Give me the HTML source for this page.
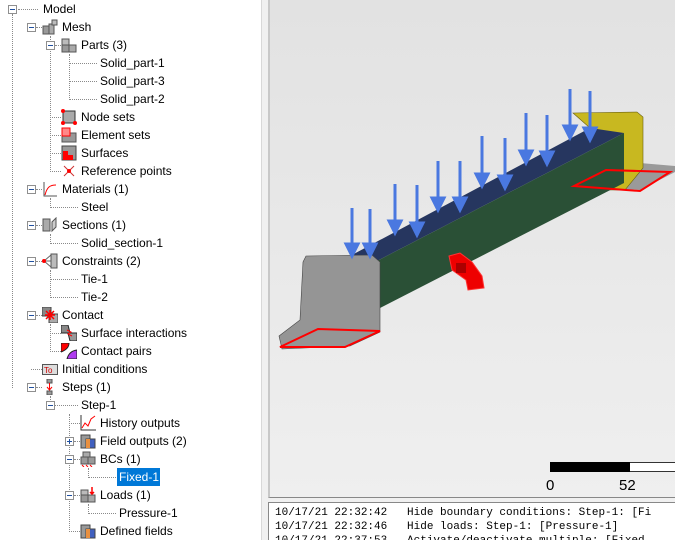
<!DOCTYPE html>
<html style="width:675px;height:540px;overflow:hidden"><head><meta charset="utf-8"><style>
*{margin:0;padding:0;box-sizing:border-box}
body{width:675px;height:540px;overflow:hidden;background:#f0f0f0;font-family:"Liberation Sans",sans-serif;position:relative}
#tree{position:absolute;left:0;top:0;width:262px;height:540px;background:#fff;border-right:1px solid #d8d8d8}
.t{position:absolute;font-size:12px;color:#000;line-height:16px;white-space:nowrap}
.v{position:absolute;width:0;border-left:1px dotted #8a8a8a}
.h{position:absolute;height:0;border-top:1px dotted #8a8a8a}
.b{position:absolute;width:9px;height:9px;border:1px solid #8f8f8f;background:#fff}
.b:after{content:"";position:absolute;left:1px;top:3px;width:5px;height:1px;background:#2050a0}
.b.p:before{content:"";position:absolute;left:3px;top:1px;width:1px;height:5px;background:#2050a0}
.i{position:absolute;width:16px;height:16px}
#vp{position:absolute;left:268px;top:0;width:407px;height:498px;background:linear-gradient(#e2e2e2,#efefef);border-left:2px solid #c8c8c8;border-bottom:1px solid #888;overflow:hidden}
#con{position:absolute;left:268px;top:502px;width:407px;height:38px;background:#fff;border:1px solid #888;border-right:none;border-bottom:none;font-family:"Liberation Mono",monospace;font-size:11px;line-height:14px;padding:3px 0 0 6px;white-space:pre;color:#000;overflow:hidden}
</style></head><body>
<div id="tree">
<div class="v" style="left:12px;top:14px;height:374px"></div>
<div class="v" style="left:50px;top:36px;height:136px"></div>
<div class="v" style="left:69px;top:54px;height:46px"></div>
<div class="v" style="left:50px;top:198px;height:10px"></div>
<div class="v" style="left:50px;top:234px;height:10px"></div>
<div class="v" style="left:50px;top:270px;height:28px"></div>
<div class="v" style="left:50px;top:324px;height:28px"></div>
<div class="v" style="left:50px;top:396px;height:10px"></div>
<div class="v" style="left:69px;top:414px;height:118px"></div>
<div class="v" style="left:88px;top:468px;height:10px"></div>
<div class="v" style="left:88px;top:504px;height:10px"></div>
<div class="h" style="left:18px;top:9px;width:20px"></div>
<div class="h" style="left:36px;top:27px;width:6px"></div>
<div class="h" style="left:55px;top:45px;width:6px"></div>
<div class="h" style="left:69px;top:63px;width:28px"></div>
<div class="h" style="left:69px;top:81px;width:28px"></div>
<div class="h" style="left:69px;top:99px;width:28px"></div>
<div class="h" style="left:50px;top:117px;width:11px"></div>
<div class="h" style="left:50px;top:135px;width:11px"></div>
<div class="h" style="left:50px;top:153px;width:11px"></div>
<div class="h" style="left:50px;top:171px;width:11px"></div>
<div class="h" style="left:36px;top:189px;width:6px"></div>
<div class="h" style="left:50px;top:207px;width:28px"></div>
<div class="h" style="left:36px;top:225px;width:6px"></div>
<div class="h" style="left:50px;top:243px;width:28px"></div>
<div class="h" style="left:36px;top:261px;width:6px"></div>
<div class="h" style="left:50px;top:279px;width:28px"></div>
<div class="h" style="left:50px;top:297px;width:28px"></div>
<div class="h" style="left:36px;top:315px;width:6px"></div>
<div class="h" style="left:50px;top:333px;width:11px"></div>
<div class="h" style="left:50px;top:351px;width:11px"></div>
<div class="h" style="left:31px;top:369px;width:11px"></div>
<div class="h" style="left:36px;top:387px;width:6px"></div>
<div class="h" style="left:55px;top:405px;width:23px"></div>
<div class="h" style="left:69px;top:423px;width:11px"></div>
<div class="h" style="left:74px;top:441px;width:6px"></div>
<div class="h" style="left:74px;top:459px;width:6px"></div>
<div class="h" style="left:88px;top:477px;width:28px"></div>
<div class="h" style="left:74px;top:495px;width:6px"></div>
<div class="h" style="left:88px;top:513px;width:28px"></div>
<div class="h" style="left:69px;top:531px;width:11px"></div>
<div class="b" style="left:8px;top:5px"></div>
<div class="b" style="left:27px;top:23px"></div>
<div class="b" style="left:46px;top:41px"></div>
<div class="b" style="left:27px;top:185px"></div>
<div class="b" style="left:27px;top:221px"></div>
<div class="b" style="left:27px;top:257px"></div>
<div class="b" style="left:27px;top:311px"></div>
<div class="b" style="left:27px;top:383px"></div>
<div class="b" style="left:46px;top:401px"></div>
<div class="b p" style="left:65px;top:437px"></div>
<div class="b" style="left:65px;top:455px"></div>
<div class="b" style="left:65px;top:491px"></div>
<svg class="i" style="left:42px;top:19px" viewBox="0 0 16 16"><rect x="1" y="7" width="6" height="8" fill="#999" stroke="#555"/><rect x="7" y="5" width="5" height="10" fill="#aaa" stroke="#555"/><rect x="10" y="1" width="5" height="5" fill="#bbb" stroke="#555"/></svg>
<svg class="i" style="left:61px;top:37px" viewBox="0 0 16 16"><rect x="1" y="8" width="7" height="7" fill="#999" stroke="#555"/><rect x="8" y="8" width="7" height="7" fill="#aaa" stroke="#555"/><rect x="1" y="2" width="7" height="6" fill="#bbb" stroke="#555"/></svg>
<svg class="i" style="left:61px;top:109px" viewBox="0 0 16 16"><rect x="2" y="2" width="12" height="12" fill="#aaa" stroke="#333"/><circle cx="2" cy="2" r="2" fill="red"/><circle cx="2" cy="14" r="2" fill="red"/><circle cx="14" cy="14" r="2" fill="red"/></svg>
<svg class="i" style="left:61px;top:127px" viewBox="0 0 16 16"><rect x="1" y="6" width="14" height="9" fill="#999" stroke="#555"/><rect x="1" y="1" width="8" height="8" fill="#f88" stroke="red"/></svg>
<svg class="i" style="left:61px;top:145px" viewBox="0 0 16 16"><rect x="1" y="1" width="14" height="14" fill="#999" stroke="#444"/><rect x="2" y="6" width="5" height="4" fill="red"/><rect x="2" y="10" width="10" height="5" fill="red"/></svg>
<svg class="i" style="left:61px;top:163px" viewBox="0 0 16 16"><path d="M3 3L13 13M13 3L3 13" stroke="#c33" stroke-width="1"/><circle cx="8" cy="8" r="2" fill="red"/></svg>
<svg class="i" style="left:42px;top:181px" viewBox="0 0 16 16"><path d="M2 1V15H15" stroke="#555" fill="none"/><path d="M3 14C5 6 8 4 14 4" stroke="red" fill="none"/></svg>
<svg class="i" style="left:42px;top:217px" viewBox="0 0 16 16"><rect x="1" y="2" width="7" height="12" fill="#aaa" stroke="#555"/><path d="M10 14L14 10V1L10 5Z" fill="#ccc" stroke="#555"/></svg>
<svg class="i" style="left:42px;top:253px" viewBox="0 0 16 16"><path d="M2 8L9 2M2 8L9 8M2 8L9 14" stroke="#666"/><rect x="9" y="1" width="6" height="14" fill="#bbb" stroke="#555"/><circle cx="2" cy="8" r="2" fill="red"/></svg>
<svg class="i" style="left:42px;top:307px" viewBox="0 0 16 16"><rect x="0" y="0" width="9" height="9" fill="#888" stroke="#444"/><rect x="7" y="7" width="9" height="9" fill="#aaa" stroke="#444"/><path d="M8 3V13M3 8H13M4 4L12 12M12 4L4 12" stroke="red" stroke-width="1.5"/></svg>
<svg class="i" style="left:61px;top:325px" viewBox="0 0 16 16"><path d="M0 0H7L9 8H0Z" fill="#888" stroke="#222"/><path d="M7 8H16V16H9Z" fill="#999" stroke="#222"/><path d="M6 5L10 7L7 9L11 11" stroke="red" fill="none"/></svg>
<svg class="i" style="left:61px;top:343px" viewBox="0 0 16 16"><path d="M0 0H8Q8 6 0 9Z" fill="red" stroke="#222"/><path d="M16 16H6Q8 8 16 7Z" fill="#b03cf0" stroke="#222"/></svg>
<svg class="i" style="left:42px;top:361px" viewBox="0 0 16 16"><rect x="0.5" y="3.5" width="15" height="10" fill="#ddd" stroke="#555"/><text x="2" y="12" font-size="8" fill="#c00" font-family="Liberation Sans">To</text></svg>
<svg class="i" style="left:42px;top:379px" viewBox="0 0 16 16"><rect x="5" y="0" width="5" height="4" fill="#999" stroke="#555"/><rect x="5" y="12" width="5" height="4" fill="#999" stroke="#555"/><path d="M7.5 4V11M5 8L7.5 11L10 8" stroke="red" fill="none"/></svg>
<svg class="i" style="left:80px;top:415px" viewBox="0 0 16 16"><path d="M1 0V15H16" stroke="#333" fill="none"/><path d="M2 13L5 8L8 11L11 4L15 1" stroke="red" fill="none"/></svg>
<svg class="i" style="left:80px;top:433px" viewBox="0 0 16 16"><rect x="1" y="2" width="9" height="13" fill="#999" stroke="#444"/><rect x="6" y="6" width="9" height="9" fill="#4060c0" stroke="#444"/><rect x="6" y="6" width="4" height="9" fill="#e89040"/></svg>
<svg class="i" style="left:80px;top:451px" viewBox="0 0 16 16"><rect x="3" y="1" width="7" height="6" fill="#aaa" stroke="#555"/><rect x="1" y="6" width="7" height="7" fill="#999" stroke="#555"/><rect x="8" y="6" width="7" height="7" fill="#999" stroke="#555"/><path d="M2 14L4 16M6 14L8 16M10 14L12 16" stroke="red"/></svg>
<svg class="i" style="left:80px;top:487px" viewBox="0 0 16 16"><rect x="1" y="8" width="7" height="7" fill="#999" stroke="#555"/><rect x="8" y="8" width="7" height="7" fill="#aaa" stroke="#555"/><rect x="1" y="3" width="7" height="5" fill="#bbb" stroke="#555"/><path d="M12 0V7M10 5L12 7L14 5" stroke="red" stroke-width="1.5" fill="none"/></svg>
<svg class="i" style="left:80px;top:523px" viewBox="0 0 16 16"><rect x="1" y="2" width="9" height="13" fill="#999" stroke="#444"/><rect x="6" y="6" width="9" height="9" fill="#4060c0" stroke="#444"/><rect x="6" y="6" width="4" height="9" fill="#e89040"/></svg>
<div style="position:absolute;left:117px;top:468px;width:43px;height:18px;background:#0078d7"></div>
<div class="t" style="left:43px;top:1px">Model</div>
<div class="t" style="left:62px;top:19px">Mesh</div>
<div class="t" style="left:81px;top:37px">Parts (3)</div>
<div class="t" style="left:100px;top:55px">Solid_part-1</div>
<div class="t" style="left:100px;top:73px">Solid_part-3</div>
<div class="t" style="left:100px;top:91px">Solid_part-2</div>
<div class="t" style="left:81px;top:109px">Node sets</div>
<div class="t" style="left:81px;top:127px">Element sets</div>
<div class="t" style="left:81px;top:145px">Surfaces</div>
<div class="t" style="left:81px;top:163px">Reference points</div>
<div class="t" style="left:62px;top:181px">Materials (1)</div>
<div class="t" style="left:81px;top:199px">Steel</div>
<div class="t" style="left:62px;top:217px">Sections (1)</div>
<div class="t" style="left:81px;top:235px">Solid_section-1</div>
<div class="t" style="left:62px;top:253px">Constraints (2)</div>
<div class="t" style="left:81px;top:271px">Tie-1</div>
<div class="t" style="left:81px;top:289px">Tie-2</div>
<div class="t" style="left:62px;top:307px">Contact</div>
<div class="t" style="left:81px;top:325px">Surface interactions</div>
<div class="t" style="left:81px;top:343px">Contact pairs</div>
<div class="t" style="left:62px;top:361px">Initial conditions</div>
<div class="t" style="left:62px;top:379px">Steps (1)</div>
<div class="t" style="left:81px;top:397px">Step-1</div>
<div class="t" style="left:100px;top:415px">History outputs</div>
<div class="t" style="left:100px;top:433px">Field outputs (2)</div>
<div class="t" style="left:100px;top:451px">BCs (1)</div>
<div class="t" style="left:119px;top:469px;color:#fff">Fixed-1</div>
<div class="t" style="left:100px;top:487px">Loads (1)</div>
<div class="t" style="left:119px;top:505px">Pressure-1</div>
<div class="t" style="left:100px;top:523px">Defined fields</div>
</div>
<div id="vp">
<svg width="407" height="498" viewBox="268 0 407 498" style="position:absolute;left:-2px;top:0">
<path d="M612 163L640 163L675 166L675 172L640 190L600 188Z" fill="#9a9a9a"/>
<path d="M573 113L637 112L643 117L643 168L625 190L590 190L622 175L622 135L590 128Z" fill="#c8b820" stroke="#6a6010" stroke-width="0.6"/>
<path d="M350 256L590 128L624 133L375 262Z" fill="#26365f"/>
<path d="M375 262L624 133L624 183L380 308Z" fill="#2a5036"/>
<path d="M306 256L372 255L380 262L380 332L350 346L282 349L279 336L300 320L303 262Z" fill="#959595" stroke="#444" stroke-width="0.6"/>
<path d="M280 347L318 329L380 331L345 347Z" fill="none" stroke="#f00" stroke-width="2"/>
<path d="M574 186L606 170L670 172L640 191Z" fill="none" stroke="#f00" stroke-width="2"/>
<path d="M449 256L460 253L472 262L482 276L484 288L468 290L466 280L452 270Z" fill="#e00" stroke="#f33"/>
<rect x="456" y="263" width="10" height="10" fill="#a00"/>
<g stroke="#4a78e0" stroke-width="3" fill="#4a78e0">
<path d="M352 208V248"/><path d="M346 244L352 256L358 244Z"/>
<path d="M370 209V248"/><path d="M364 244L370 256L376 244Z"/>
<path d="M395 184V225"/><path d="M389 221L395 233L401 221Z"/>
<path d="M417 185V227"/><path d="M411 223L417 235L423 223Z"/>
<path d="M438 161V202"/><path d="M432 198L438 210L444 198Z"/>
<path d="M460 161V202"/><path d="M454 198L460 210L466 198Z"/>
<path d="M482 136V178"/><path d="M476 174L482 186L488 174Z"/>
<path d="M505 138V180"/><path d="M499 176L505 188L511 176Z"/>
<path d="M526 113V155"/><path d="M520 151L526 163L532 151Z"/>
<path d="M547 115V156"/><path d="M541 152L547 164L553 152Z"/>
<path d="M570 89V130"/><path d="M564 126L570 138L576 126Z"/>
<path d="M590 91V132"/><path d="M584 128L590 140L596 128Z"/>
</g>
<rect x="550.5" y="462.5" width="130" height="9" fill="#fff" stroke="#333"/>
<rect x="550" y="462" width="80" height="10" fill="#000"/>
<text x="546" y="490" font-size="15" font-family="Liberation Sans" fill="#000">0</text>
<text x="619" y="490" font-size="15" font-family="Liberation Sans" fill="#000">52</text>
</svg>
</div>
<div id="con">10/17/21 22:32:42   Hide boundary conditions: Step-1: [Fi
10/17/21 22:32:46   Hide loads: Step-1: [Pressure-1]
10/17/21 22:37:53   Activate/deactivate multiple: [Fixed</div>
</body></html>
